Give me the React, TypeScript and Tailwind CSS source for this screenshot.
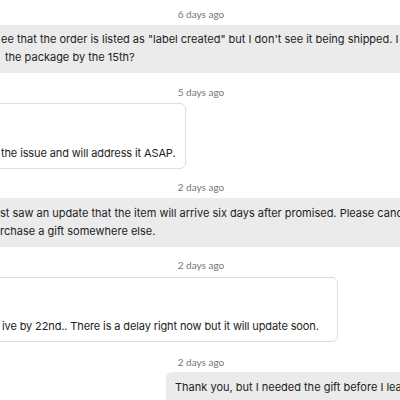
import React from "react";

const font = { fontFamily: "Lato, 'Liberation Sans', sans-serif" };
const body = { fontFamily: "Inter, 'Liberation Sans', sans-serif" };

function Stamp({ children, mt }: { children: React.ReactNode; mt: string }) {
  return (
    <div
      className={`${mt} flex h-[14px] items-center justify-center pl-[2px] text-[10px] leading-[14px] text-[#757575]`}
      style={font}
    >
      {children}
    </div>
  );
}

export default function App() {
  return (
    <div
      className="flex h-[400px] w-[400px] flex-col overflow-hidden bg-white pt-[7px] text-[11px] leading-[18px] text-[#222222]"
      style={body}
    >
      <Stamp mt="mt-0">6 days ago</Stamp>

      <div className="-ml-[20px] mt-[4px] w-[440px] shrink-0 rounded-[6px] bg-[#ebebeb] pb-[7px] pl-[21px] pt-[5px]">
        <div className="whitespace-nowrap">
          ee that the order is listed as "label created" but I don't see it being shipped. I need
        </div>
        <div className="ml-[4px] whitespace-nowrap">the package by the 15th?</div>
      </div>

      <Stamp mt="mt-[12px]">5 days ago</Stamp>

      <div className="-ml-[20px] mt-[4px] w-[206px] shrink-0 rounded-[6px] border border-[#dedede] bg-white pb-[6px] pl-[20px] pt-[40px]">
        <div className="whitespace-nowrap tracking-[-0.12px]">the issue and will address it ASAP.</div>
      </div>

      <Stamp mt="mt-[11px]">2 days ago</Stamp>

      <div className="-ml-[20px] mt-[4px] w-[440px] shrink-0 rounded-[6px] bg-[#ebebeb] pb-[7px] pl-[20px] pt-[6px]">
        <div className="whitespace-nowrap">
          st saw an update that the item will arrive six days after promised. Please cancel
        </div>
        <div className="whitespace-nowrap">rchase a gift somewhere else.</div>
      </div>

      <Stamp mt="mt-[11px]">2 days ago</Stamp>

      <div className="-ml-[20px] mt-[5px] w-[358px] shrink-0 rounded-[6px] border border-[#dedede] bg-white pb-[6px] pl-[21px] pt-[39px]">
        <div className="whitespace-nowrap tracking-[-0.12px]">
          ive by 22nd.. There is a delay right now but it will update soon.
        </div>
      </div>

      <Stamp mt="mt-[13px]">2 days ago</Stamp>

      <div className="ml-[166px] mt-[3px] w-[260px] shrink-0 rounded-[6px] bg-[#ebebeb] pb-[8px] pl-[9px] pt-[6px]">
        <div className="whitespace-nowrap">Thank you, but I needed the gift before I leave</div>
      </div>
    </div>
  );
}
